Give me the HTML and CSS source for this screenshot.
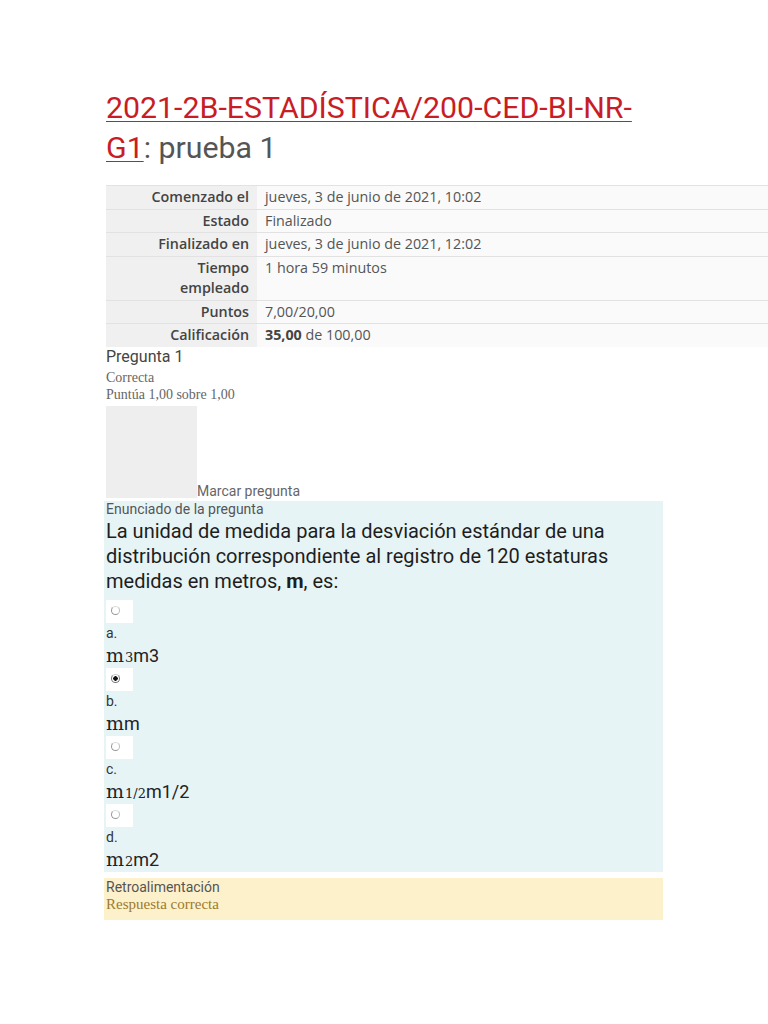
FILE: index.html
```html
<!DOCTYPE html>
<html lang="es">
<head>
<meta charset="utf-8">
<link rel="stylesheet" href="styles.css">
</head>
<body>
<div class="page">
  <h1 class="title"><a href="#">2021-2B-ESTADÍSTICA/200-CED-BI-NR-G1</a>: prueba 1</h1>
  <table class="summary">
    <tr><th>Comenzado el</th><td>jueves, 3 de junio de 2021, 10:02</td></tr>
    <tr><th>Estado</th><td>Finalizado</td></tr>
    <tr><th>Finalizado en</th><td>jueves, 3 de junio de 2021, 12:02</td></tr>
    <tr><th>Tiempo<br>empleado</th><td>1 hora 59 minutos</td></tr>
    <tr><th>Puntos</th><td>7,00/20,00</td></tr>
    <tr><th>Calificación</th><td><b>35,00</b> de 100,00</td></tr>
  </table>
  <div class="qinfo">
    <div class="qno">Pregunta 1</div>
    <div class="state">Correcta</div>
    <div class="grade">Puntúa 1,00 sobre 1,00</div>
    <div class="flagrow">
      <div class="flagbox"></div>
      <span class="flag">Marcar pregunta</span>
    </div>
  </div>
  <div class="content">
    <div class="label">Enunciado de la pregunta</div>
    <div class="qtext">La unidad de medida para la desviación estándar de una distribución correspondiente al registro de 120 estaturas medidas en metros, <b>m</b>, es:</div>
    <div class="answers">
      <div class="opt">
        <div class="radio"><span class="dot"></span></div>
        <div class="letter">a.</div>
        <div class="math"><span class="mi">m</span><span class="sup">3</span><span class="plain">m3</span></div>
      </div>
      <div class="opt">
        <div class="radio"><span class="dot checked"></span></div>
        <div class="letter">b.</div>
        <div class="math"><span class="mi">m</span><span class="plain">m</span></div>
      </div>
      <div class="opt">
        <div class="radio"><span class="dot"></span></div>
        <div class="letter">c.</div>
        <div class="math"><span class="mi">m</span><span class="sup">1/2</span><span class="plain">m1/2</span></div>
      </div>
      <div class="opt">
        <div class="radio"><span class="dot"></span></div>
        <div class="letter">d.</div>
        <div class="math"><span class="mi">m</span><span class="sup">2</span><span class="plain">m2</span></div>
      </div>
    </div>
  </div>
  <div class="feedback">
    <div class="label">Retroalimentación</div>
    <div class="fbtext">Respuesta correcta</div>
  </div>
</div>
</body>
</html>
```

FILE: styles.css
```css
html, body { margin: 0; padding: 0; background: #fff; }
body { font-family: Roboto, "Noto Sans", sans-serif; color: #333; }
.page { padding: 88px 0 0 106px; }

.title {
  margin: 0;
  width: 540px;
  font-weight: 400;
  font-size: 30.3px;
  line-height: 40px;
  color: #555;
}
.title a { color: #c81d25; text-decoration: underline; text-decoration-thickness: 1px; text-underline-offset: 3px; }

.summary {
  margin-top: 17px;
  width: calc(100% + 2px);
  border-collapse: collapse;
  font-family: "Open Sans", sans-serif;
  font-size: 14.3px;
  line-height: 20.5px;
}
.summary th, .summary td {
  border-top: 1px solid #e2e2e2;
  padding: 1px 8px 1px 0;
  vertical-align: top;
}
.summary th {
  width: 143px;
  text-align: right;
  font-weight: 600;
  color: #444;
  background: #f0f0f0;
}
.summary td { padding-left: 8px; color: #555; background: #fafafa; }
.summary td b { color: #444; font-weight: 700; }

.qinfo { margin-top: 0; }
.qno { font-size: 16px; line-height: 20px; color: #444; }
.state, .grade { font-family: "Liberation Serif", serif; font-size: 14px; line-height: 17px; color: #666; }
.state { margin-top: 2px; }
.flagrow { display: flex; align-items: flex-end; margin-top: 3px; }
.flagbox { width: 91px; height: 92px; background: #eee; }
.flag { font-size: 14px; line-height: 16px; color: #666; margin-bottom: -1px; }

.content {
  margin: 3px 105px 0 -2px;
  padding: 0 0 0 2px;
  background: #e7f4f6;
}
.label { font-size: 14px; line-height: 16px; color: #555; }
.qtext { font-size: 20px; line-height: 25px; color: #1e1e1e; margin-top: 2px; padding-right: 20px; }
.answers { margin-top: 6px; }
.opt { display: flex; flex-direction: column; }
.radio {
  width: 27px; height: 23px; background: #fff;
  display: flex; align-items: center; justify-content: flex-start;
}
.dot {
  width: 7px; height: 7px; margin-left: 5px; margin-top: -2px;
  border: 1.5px solid #999; border-top-color: #ddd; border-right-color: #bbb;
  border-radius: 50%; box-sizing: content-box;
}
.dot.checked { background: radial-gradient(circle, #111 0 2px, transparent 2.5px); border-color: #777; border-top-color: #ccc; }
.letter { font-size: 14px; line-height: 16px; color: #333; margin-top: 2px; }
.math { height: 27px; display: flex; align-items: baseline; line-height: 29px; color: #222; }
.mi { font-family: "DejaVu Serif", "Liberation Serif", serif; font-size: 19px; }
.sup { font-family: "DejaVu Serif", "Liberation Serif", serif; font-size: 13px; margin-left: 1px; }
.plain { font-size: 18px; }

.feedback {
  margin: 6px 105px 0 -2px;
  padding: 1px 0 6px 2px;
  background: #fdf1cc;
}
.fbtext { font-family: "Liberation Serif", serif; font-size: 15px; line-height: 19px; color: #9c7a2c; }
```
